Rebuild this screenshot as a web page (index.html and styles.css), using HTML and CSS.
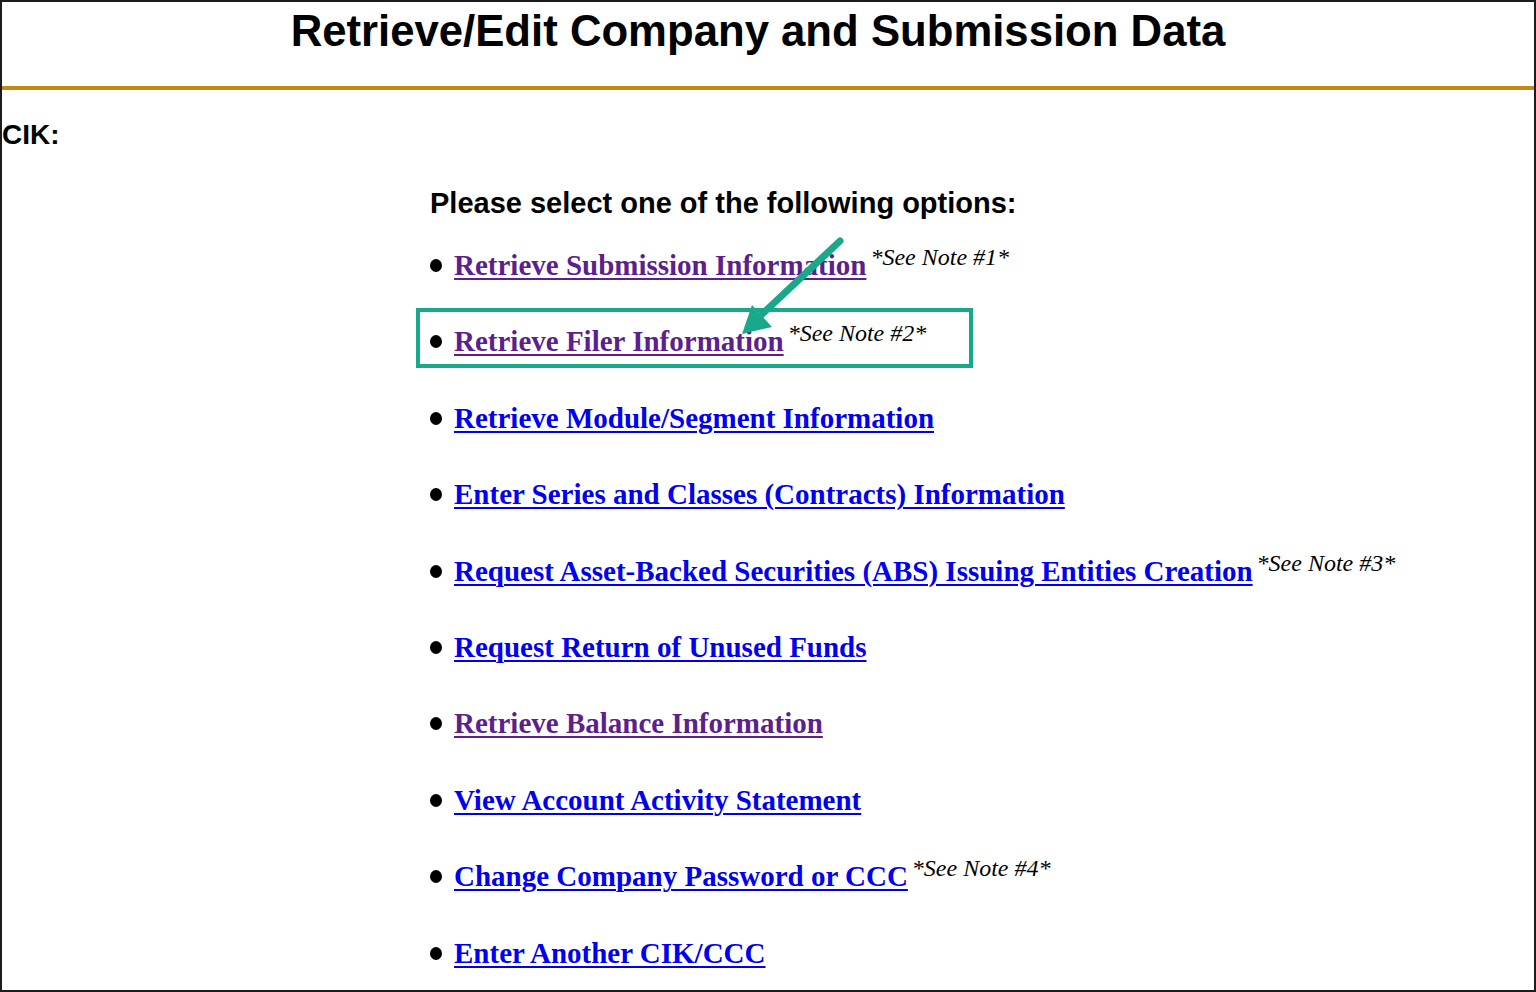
FILE: index.html
```html
<!DOCTYPE html>
<html>
<head>
<meta charset="utf-8">
<title>Retrieve/Edit Company and Submission Data</title>
<link rel="stylesheet" href="styles.css">
</head>
<body>
<div class="frame">
  <header class="header">
    <h1 class="title">Retrieve/Edit Company and Submission Data</h1>
  </header>
  <div class="cik">CIK:</div>
  <section class="options">
    <h2 class="prompt">Please select one of the following options:</h2>
    <ul class="list">
      <li class="item"><a class="link visited" href="#">Retrieve Submission Information</a><sup class="note">*See Note #1*</sup></li>
      <li class="item"><a class="link visited" href="#">Retrieve Filer Information</a><sup class="note">*See Note #2*</sup></li>
      <li class="item"><a class="link" href="#">Retrieve Module/Segment Information</a></li>
      <li class="item"><a class="link" href="#">Enter Series and Classes (Contracts) Information</a></li>
      <li class="item"><a class="link" href="#">Request Asset-Backed Securities (ABS) Issuing Entities Creation</a><sup class="note">*See Note #3*</sup></li>
      <li class="item"><a class="link" href="#">Request Return of Unused Funds</a></li>
      <li class="item"><a class="link visited" href="#">Retrieve Balance Information</a></li>
      <li class="item"><a class="link" href="#">View Account Activity Statement</a></li>
      <li class="item"><a class="link" href="#">Change Company Password or CCC</a><sup class="note">*See Note #4*</sup></li>
      <li class="item"><a class="link" href="#">Enter Another CIK/CCC</a></li>
    </ul>
  </section>
  <svg class="annotation" width="1536" height="992" viewBox="0 0 1536 992" xmlns="http://www.w3.org/2000/svg">
    <rect x="418" y="310" width="553" height="56" fill="none" stroke="#17a98a" stroke-width="4"/>
    <line x1="840" y1="241" x2="758" y2="318" stroke="#17a98a" stroke-width="7" stroke-linecap="round"/>
    <polygon points="742,334 752,305 772,327" fill="#17a98a"/>
  </svg>
</div>
</body>
</html>
```

FILE: styles.css
```css
html, body {
  margin: 0;
  padding: 0;
  background: #ffffff;
}

.frame {
  position: relative;
  width: 1536px;
  height: 992px;
  box-sizing: border-box;
  border: 2px solid #1c1c1c;
  overflow: hidden;
  font-family: "Liberation Sans", Arial, sans-serif;
  color: #000;
}

.header {
  height: 84px;
  border-bottom: 4px solid #bf8a0f;
  text-align: center;
}

.title {
  margin: 0;
  padding-top: 6px;
  padding-right: 20px;
  font-size: 43.7px;
  font-weight: bold;
  line-height: 46px;
}

.cik {
  margin-top: 28px;
  margin-left: 0;
  font-size: 28px;
  font-weight: bold;
  line-height: 34px;
}

.options {
  margin-left: 428px;
  margin-top: 34px;
}

.prompt {
  margin: 0;
  font-size: 29px;
  font-weight: bold;
  line-height: 34px;
}

.list {
  list-style: none;
  margin: 25px 0 0 0;
  padding: 0;
}

.item {
  display: flex;
  align-items: flex-start;
  height: 76.4px;
  font-family: "Liberation Serif", "Times New Roman", serif;
  font-size: 29px;
  font-weight: bold;
  line-height: 40px;
}

.item::before {
  content: "";
  flex: none;
  width: 12px;
  height: 13px;
  margin: 14px 12px 0 0;
  border-radius: 50%;
  background: #000;
}

.link {
  color: #0000ee;
  text-decoration: underline;
  text-decoration-thickness: 2px;
  text-underline-offset: 3px;
}

.link.visited {
  color: #5b1f8e;
}

.note {
  font-family: "Liberation Serif", "Times New Roman", serif;
  font-size: 24px;
  font-style: italic;
  font-weight: normal;
  line-height: 24px;
  margin-left: 4px;
  margin-top: 0;
  vertical-align: baseline;
}

.annotation {
  position: absolute;
  left: -2px;
  top: -2px;
  pointer-events: none;
}
```
